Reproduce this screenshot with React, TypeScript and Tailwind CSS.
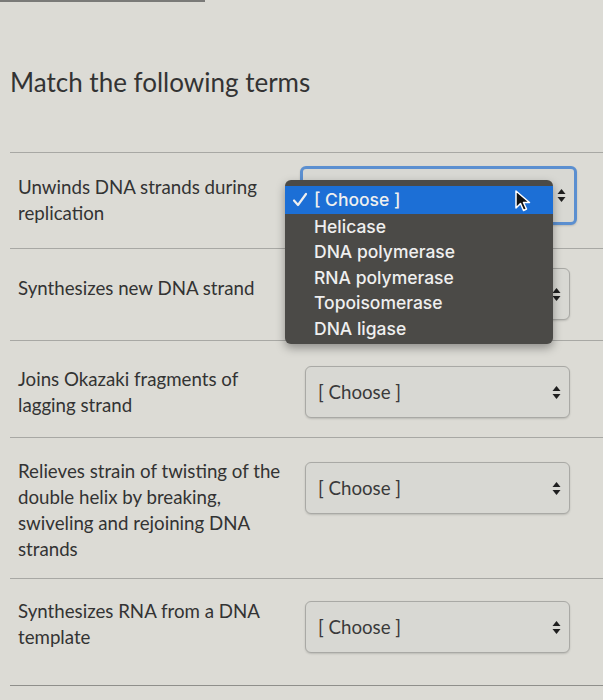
import React from 'react';

const rows = [
    { lines: ['Unwinds DNA strands during', 'replication'], h: 'h-[96px]', textTop: 'pt-[21px]', selTop: 'pt-[13px]', open: true },
    { lines: ['Synthesizes new DNA strand'], h: 'h-[92px]', textTop: 'pt-[26px]', selTop: 'pt-[19px]', open: false },
    { lines: ['Joins Okazaki fragments of', 'lagging strand'], h: 'h-[97px]', textTop: 'pt-[25px]', selTop: 'pt-[25px]', open: false },
    { lines: ['Relieves strain of twisting of the', 'double helix by breaking,', 'swiveling and rejoining DNA', 'strands'], h: 'h-[141px]', textTop: 'pt-[20px]', selTop: 'pt-[24px]', open: false },
    { lines: ['Synthesizes RNA from a DNA', 'template'], h: 'h-[108px]', textTop: 'pt-[19px]', selTop: 'pt-[22px]', open: false },
];

const options = ['Helicase', 'DNA polymerase', 'RNA polymerase', 'Topoisomerase', 'DNA ligase'];

const Arrows: React.FC = () => (
    <svg width="9" height="15" viewBox="0 0 9 15" className="shrink-0">
        <path d="M4.5 1 L8.5 6 L0.5 6 Z" fill="#1f1f1f" />
        <path d="M4.5 14 L8.5 9 L0.5 9 Z" fill="#1f1f1f" />
    </svg>
);

const Select: React.FC<{ focused?: boolean }> = ({ focused }) => (
    <div
        className={`rounded-[6px] flex items-center justify-between pl-[12px] pr-[8px] bg-[#d8d8d3] shadow-[0_1px_2px_rgba(0,0,0,0.15)] ${
            focused ? 'border-[3px] border-[#5b8fd0] h-[59px] w-[277px] -ml-[5px]' : 'border border-[#a9a9a5] w-[265px] h-[52px]'
        }`}
    >
        <span className="text-[18.7px] text-[#3a3a3a]">[ Choose ]</span>
        <Arrows />
    </div>
);

const Cursor: React.FC = () => (
    <svg width="18" height="24" viewBox="0 0 18 24" className="absolute left-[229px] top-[3px]">
        <path d="M2 2 L2 19 L6.5 14.5 L9.5 21.5 L12.5 20 L9.5 13.5 L15.5 13.5 Z" fill="#111" stroke="#fff" strokeWidth="1.5" strokeLinejoin="round" />
    </svg>
);

const Check: React.FC = () => (
    <svg width="16" height="16" viewBox="0 0 16 16" className="ml-[7px] mr-[6px]">
        <path d="M2 8.5 L6 13 L14 2" fill="none" stroke="#efefef" strokeWidth="2.2" strokeLinecap="round" strokeLinejoin="round" />
    </svg>
);

const Menu: React.FC = () => (
    <div className="absolute left-[-20px] top-[14px] w-[268px] h-[164px] rounded-[6px] bg-[#4b4a47] shadow-[0_4px_10px_rgba(0,0,0,0.35)] pt-[6px] font-['Inter',sans-serif] font-medium text-[17.5px] text-[#efefef] z-10">
        <div className="relative h-[28px] bg-[#1c6fd6] flex items-center">
            <Check />
            <span>[ Choose ]</span>
            <Cursor />
        </div>
        {options.map((o) => (
            <div key={o} className="h-[25.5px] flex items-center pl-[29px]">
                {o}
            </div>
        ))}
    </div>
);

export default function App() {
    return (
        <div className="w-[603px] h-[700px] overflow-hidden bg-[#dcdbd5] font-['Lato',sans-serif] text-[#333333]">
            <div className="w-[205px] h-[2px] bg-[#7a7a78]" />
            <div className="h-[150px] pl-[10px] pt-[63px]">
                <h1 className="text-[26px] leading-[34px]">Match the following terms</h1>
            </div>
            {rows.map((r, i) => (
                <div
                    key={i}
                    className={`${r.h} ml-[10px] border-t border-[#a8a8a4] flex items-start ${i === rows.length - 1 ? 'border-b border-b-[#8f8f8b]' : ''}`}
                >
                    <div className={`w-[295px] pl-[8px] text-[18.7px] leading-[26px] ${r.textTop}`}>
                        {r.lines.map((l) => (
                            <div key={l}>{l}</div>
                        ))}
                    </div>
                    <div className={`relative ${r.selTop}`}>
                        <div className="relative">
                            <Select focused={r.open} />
                            {r.open && <Menu />}
                        </div>
                    </div>
                </div>
            ))}
        </div>
    );
}
